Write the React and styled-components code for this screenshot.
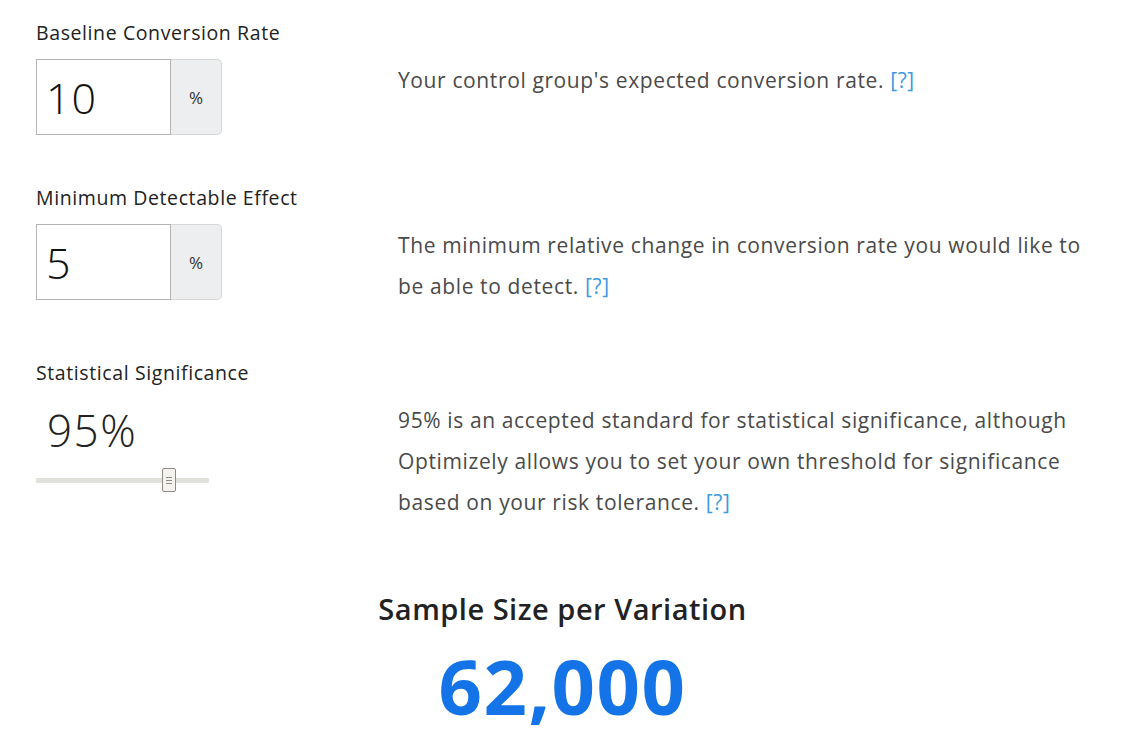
import React from "react";
import styled, { createGlobalStyle } from "styled-components";

const Global = createGlobalStyle`
  html, body { margin: 0; padding: 0; background: #fff; }
  body { font-family: "Open Sans", Lato, sans-serif; color: #222; }
`;

const Page = styled.div`
  width: 1125px;
  padding: 20px 0 0 36px;
  box-sizing: border-box;
`;

const Rows = styled.div`
  display: flex;
  flex-direction: column;
`;

const Row = styled.div`
  display: grid;
  grid-template-columns: 362px 1fr;
  grid-template-rows: auto auto;
  margin-top: ${(p) => p.$space || 0}px;
`;

const Label = styled.div`
  grid-column: 1 / 3;
  font-size: 19.5px;
  letter-spacing: 0.6px;
  line-height: 26px;
  color: #222;
  margin-bottom: 13px;
`;

const InputGroup = styled.div`
  display: flex;
  width: 186px;
  height: 76px;
`;

const NumInput = styled.div`
  width: 135px;
  box-sizing: border-box;
  border: 1px solid #b5b5b5;
  display: flex;
  align-items: center;
  padding-left: 9px;
  font-size: 43px;
  font-weight: 300;
  letter-spacing: 1px;
  color: #111;
`;

const Addon = styled.div`
  width: 51px;
  box-sizing: border-box;
  background: #eceeef;
  border: 1px solid #d6d6d6;
  border-left: none;
  border-radius: 0 5px 5px 0;
  display: flex;
  align-items: center;
  justify-content: center;
  font-size: 17px;
  color: #333;
`;

const Desc = styled.p`
  margin: 0;
  padding-top: 1px;
  font-size: 21px;
  letter-spacing: 0.62px;
  line-height: 41px;
  color: #4a4a4a;
  max-width: 700px;
  font-weight: 400;
`;

const Help = styled.a`
  color: #3d9ae0;
  text-decoration: none;
`;

const SliderBox = styled.div`
  display: flex;
  flex-direction: column;
  padding-top: 3px;
`;

const BigValue = styled.div`
  font-size: 44px;
  font-weight: 300;
  letter-spacing: 1.5px;
  line-height: 56px;
  padding-left: 11px;
  color: #222;
`;

const Track = styled.div`
  position: relative;
  width: 173px;
  height: 5px;
  background: #e3e1db;
  margin-top: 20px;
  border-radius: 1px;
`;

const Handle = styled.div`
  position: absolute;
  left: 126px;
  top: -10px;
  width: 14px;
  height: 24px;
  box-sizing: border-box;
  background: #f4f3ef;
  border: 1px solid #8f8a84;
  border-radius: 2px;
  display: flex;
  flex-direction: column;
  align-items: center;
  justify-content: center;
  gap: 2px;
`;

const Grip = styled.span`
  display: block;
  width: 6px;
  height: 1px;
  background: #8f8a84;
`;

const Result = styled.div`
  display: flex;
  flex-direction: column;
  align-items: center;
  margin: 66px 0 0 -36px;
`;

const ResultTitle = styled.div`
  font-size: 29px;
  font-weight: 600;
  letter-spacing: 0.5px;
  color: #222;
  line-height: 40px;
`;

const ResultValue = styled.div`
  font-size: 76px;
  font-weight: 700;
  letter-spacing: 1.5px;
  color: #1473e6;
  line-height: 90px;
  margin-top: 12px;
`;

function PercentInput({ value }) {
  return (
    <InputGroup>
      <NumInput>{value}</NumInput>
      <Addon>%</Addon>
    </InputGroup>
  );
}

export default function App() {
  return (
    <>
      <Global />
      <Page>
        <Rows>
          <Row>
            <Label>Baseline Conversion Rate</Label>
            <PercentInput value="10" />
            <Desc>
              Your control group's expected conversion rate. <Help href="#">[?]</Help>
            </Desc>
          </Row>
          <Row $space={50}>
            <Label>Minimum Detectable Effect</Label>
            <PercentInput value="5" />
            <Desc>
              The minimum relative change in conversion rate you would like to be able to detect.{" "}
              <Help href="#">[?]</Help>
            </Desc>
          </Row>
          <Row $space={53}>
            <Label>Statistical Significance</Label>
            <SliderBox>
              <BigValue>95%</BigValue>
              <Track>
                <Handle>
                  <Grip />
                  <Grip />
                  <Grip />
                </Handle>
              </Track>
            </SliderBox>
            <Desc>
              95% is an accepted standard for statistical significance, although Optimizely allows you to set
              your own threshold for significance based on your risk tolerance. <Help href="#">[?]</Help>
            </Desc>
          </Row>
        </Rows>
        <Result>
          <ResultTitle>Sample Size per Variation</ResultTitle>
          <ResultValue>62,000</ResultValue>
        </Result>
      </Page>
    </>
  );
}
